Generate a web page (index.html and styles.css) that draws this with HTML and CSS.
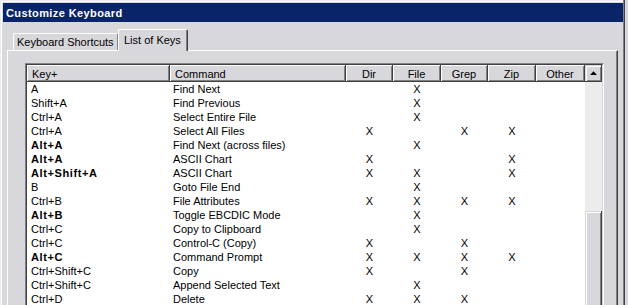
FILE: index.html
```html
<!DOCTYPE html>
<html>
<head>
<meta charset="utf-8">
<link rel="stylesheet" href="styles.css">
</head>
<body>
<div class="window">
  <div class="titlebar">Customize Keyboard</div>
  <div class="client">
    <div class="tabs">
      <div class="tab">Keyboard Shortcuts</div>
      <div class="tab tab-active">List of Keys</div>
    </div>
    <div class="panel">
      <div class="listview">
        <div class="lv-inner">
          <div class="lv-table">
            <div class="lv-head">
              <div class="th th-key">Key+</div>
              <div class="th th-cmd">Command</div>
              <div class="th th-flag">Dir</div>
              <div class="th th-flag">File</div>
              <div class="th th-flag">Grep</div>
              <div class="th th-flag">Zip</div>
              <div class="th th-flag">Other</div>
            </div>
            <div class="lv-row"><div class="td key">A</div><div class="td cmd">Find Next</div><div class="td flag"></div><div class="td flag">X</div><div class="td flag"></div><div class="td flag"></div><div class="td flag"></div></div>
            <div class="lv-row"><div class="td key">Shift+A</div><div class="td cmd">Find Previous</div><div class="td flag"></div><div class="td flag">X</div><div class="td flag"></div><div class="td flag"></div><div class="td flag"></div></div>
            <div class="lv-row"><div class="td key">Ctrl+A</div><div class="td cmd">Select Entire File</div><div class="td flag"></div><div class="td flag">X</div><div class="td flag"></div><div class="td flag"></div><div class="td flag"></div></div>
            <div class="lv-row"><div class="td key">Ctrl+A</div><div class="td cmd">Select All Files</div><div class="td flag">X</div><div class="td flag"></div><div class="td flag">X</div><div class="td flag">X</div><div class="td flag"></div></div>
            <div class="lv-row"><div class="td key bold">Alt+A</div><div class="td cmd">Find Next (across files)</div><div class="td flag"></div><div class="td flag">X</div><div class="td flag"></div><div class="td flag"></div><div class="td flag"></div></div>
            <div class="lv-row"><div class="td key bold">Alt+A</div><div class="td cmd">ASCII Chart</div><div class="td flag">X</div><div class="td flag"></div><div class="td flag"></div><div class="td flag">X</div><div class="td flag"></div></div>
            <div class="lv-row"><div class="td key bold">Alt+Shift+A</div><div class="td cmd">ASCII Chart</div><div class="td flag">X</div><div class="td flag">X</div><div class="td flag"></div><div class="td flag">X</div><div class="td flag"></div></div>
            <div class="lv-row"><div class="td key">B</div><div class="td cmd">Goto File End</div><div class="td flag"></div><div class="td flag">X</div><div class="td flag"></div><div class="td flag"></div><div class="td flag"></div></div>
            <div class="lv-row"><div class="td key">Ctrl+B</div><div class="td cmd">File Attributes</div><div class="td flag">X</div><div class="td flag">X</div><div class="td flag">X</div><div class="td flag">X</div><div class="td flag"></div></div>
            <div class="lv-row"><div class="td key bold">Alt+B</div><div class="td cmd">Toggle EBCDIC Mode</div><div class="td flag"></div><div class="td flag">X</div><div class="td flag"></div><div class="td flag"></div><div class="td flag"></div></div>
            <div class="lv-row"><div class="td key">Ctrl+C</div><div class="td cmd">Copy to Clipboard</div><div class="td flag"></div><div class="td flag">X</div><div class="td flag"></div><div class="td flag"></div><div class="td flag"></div></div>
            <div class="lv-row"><div class="td key">Ctrl+C</div><div class="td cmd">Control-C (Copy)</div><div class="td flag">X</div><div class="td flag"></div><div class="td flag">X</div><div class="td flag"></div><div class="td flag"></div></div>
            <div class="lv-row"><div class="td key bold">Alt+C</div><div class="td cmd">Command Prompt</div><div class="td flag">X</div><div class="td flag">X</div><div class="td flag">X</div><div class="td flag">X</div><div class="td flag"></div></div>
            <div class="lv-row"><div class="td key">Ctrl+Shift+C</div><div class="td cmd">Copy</div><div class="td flag">X</div><div class="td flag"></div><div class="td flag">X</div><div class="td flag"></div><div class="td flag"></div></div>
            <div class="lv-row"><div class="td key">Ctrl+Shift+C</div><div class="td cmd">Append Selected Text</div><div class="td flag"></div><div class="td flag">X</div><div class="td flag"></div><div class="td flag"></div><div class="td flag"></div></div>
            <div class="lv-row"><div class="td key">Ctrl+D</div><div class="td cmd">Delete</div><div class="td flag">X</div><div class="td flag">X</div><div class="td flag">X</div><div class="td flag"></div><div class="td flag"></div></div>
          </div>
          <div class="vscroll">
            <div class="sb-btn"><svg class="sb-arrow" width="7" height="4" viewBox="0 0 7 4"><polygon points="0,4 7,4 3.5,0.3" fill="#000"/></svg></div>
            <div class="sb-track"></div>
            <div class="sb-thumb"></div>
          </div>
        </div>
      </div>
    </div>
  </div>
</div>
</body>
</html>
```

FILE: styles.css
```css
html, body {
  margin: 0;
  padding: 0;
  height: 305px;
  overflow: hidden;
  background: #d8d7dc;
}

body {
  font-family: "Liberation Sans", Arial, sans-serif;
  font-size: 11px;
  color: #000;
}

.window {
  width: 625px;
  height: 420px;
  box-sizing: border-box;
  padding: 3px 1px 0 3px;
  background: #d8d7dc;
  border-right: 1px solid #404040;
  box-shadow: inset -1px 0 #808080, inset 1px 1px #ececec, inset 2px 2px #ffffff;
}

.titlebar {
  height: 17px;
  padding: 2px 0 0 3px;
  line-height: 17px;
  background: #0a246a;
  color: #ffffff;
  font-weight: bold;
  letter-spacing: 0.4px;
  white-space: nowrap;
}

.client {
  padding: 7px 0 0 4px;
}

.tabs {
  display: flex;
  align-items: flex-end;
  height: 21px;
  padding-left: 6px;
}

.tab {
  box-sizing: border-box;
  width: 105px;
  padding: 1px 2px 1px 3px;
  line-height: 14px;
  border-top: 1px solid #ffffff;
  border-left: 1px solid #ffffff;
  border-right: 1px solid #808080;
  border-radius: 2px 2px 0 0;
  white-space: nowrap;
}

.tab-active {
  position: relative;
  z-index: 1;
  width: 70px;
  padding: 3px 2px 4px 5px;
  margin-bottom: -1px;
  background: #d8d7dc;
  border-right: 1px solid #404040;
  box-shadow: inset -1px 0 #808080;
}

.panel {
  box-sizing: border-box;
  width: 611px;
  height: 360px;
  padding: 12px 0 0 17px;
  border-top: 1px solid #ffffff;
  border-left: 1px solid #ffffff;
  border-right: 1px solid #404040;
  box-shadow: inset -1px 0 #808080;
}

.listview {
  box-sizing: border-box;
  width: 579px;
  height: 300px;
  border: 1px solid;
  border-color: #808080 #ffffff #ffffff #808080;
}

.lv-inner {
  display: flex;
  height: 100%;
  box-sizing: border-box;
  border: 1px solid;
  border-color: #404040 #d8d7dc #d8d7dc #404040;
  background: #ffffff;
}

.lv-table {
  width: 558px;
}

.lv-head,
.lv-row {
  display: grid;
  grid-template-columns: 143px 176px 47px 48px 47px 48px 49px;
}

.th {
  box-sizing: border-box;
  height: 17px;
  padding-top: 2px;
  line-height: 14px;
  background: #d8d7dc;
  border-right: 1px solid #404040;
  border-bottom: 1px solid #404040;
  box-shadow: inset 1px 1px #ffffff, inset -1px -1px #808080;
  white-space: nowrap;
  overflow: hidden;
}

.th-key,
.th-cmd {
  padding-left: 5px;
}

.th-flag {
  text-align: center;
}

.lv-row {
  height: 14px;
  line-height: 14px;
}

.td {
  white-space: nowrap;
  overflow: hidden;
}

.key {
  padding-left: 4px;
}

.bold {
  font-weight: bold;
  letter-spacing: 0.6px;
}

.cmd {
  padding-left: 3px;
}

.flag {
  text-align: center;
}

.vscroll {
  width: 17px;
  display: flex;
  flex-direction: column;
}

.sb-btn,
.sb-thumb {
  box-sizing: border-box;
  background: #d8d7dc;
  border-right: 1px solid #404040;
  border-bottom: 1px solid #404040;
  box-shadow: inset 1px 1px #d8d7dc, inset 2px 2px #ffffff, inset -1px -1px #808080;
}

.sb-btn {
  height: 17px;
  display: flex;
  align-items: center;
  justify-content: center;
}

.sb-arrow {
  display: block;
  margin: 0 0 1px 1px;
}

.sb-track {
  height: 129px;
  background: #ececec;
}

.sb-thumb {
  flex: 1;
}
```
